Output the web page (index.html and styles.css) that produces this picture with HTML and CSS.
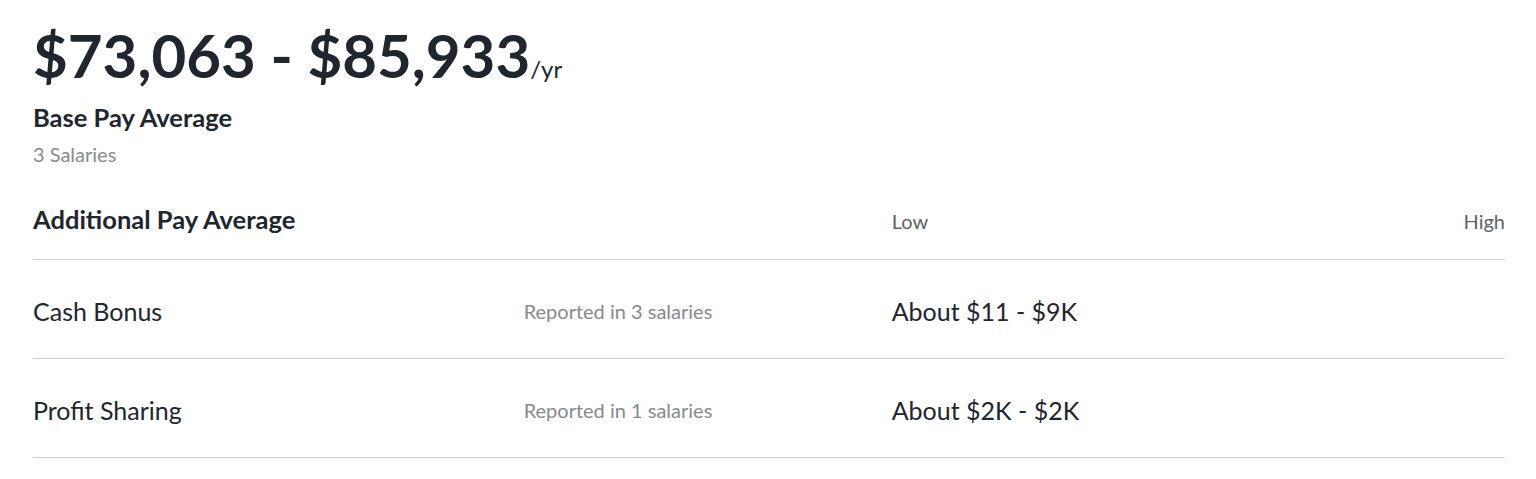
FILE: index.html
```html
<!DOCTYPE html>
<html lang="en">
<head>
  <meta charset="utf-8">
  <title>Salary Summary</title>
  <link rel="stylesheet" href="styles.css">
</head>
<body>
  <div class="salary-container">
    <div class="base-pay">
      <div class="pay-range">$73,063 - $85,933<span class="pay-period">/yr</span></div>
      <div class="pay-title">Base Pay Average</div>
      <div class="pay-count">3 Salaries</div>
    </div>

    <div class="additional-pay">
      <div class="pay-row pay-header">
        <div class="header-title">Additional Pay Average</div>
        <div></div>
        <div class="range-labels">
          <span>Low</span>
          <span>High</span>
        </div>
      </div>
      <div class="pay-row">
        <div class="pay-name">Cash Bonus</div>
        <div class="pay-reported">Reported in 3 salaries</div>
        <div class="pay-amount">About $11 - $9K</div>
      </div>
      <div class="pay-row">
        <div class="pay-name">Profit Sharing</div>
        <div class="pay-reported">Reported in 1 salaries</div>
        <div class="pay-amount">About $2K - $2K</div>
      </div>
    </div>
  </div>
</body>
</html>
```

FILE: styles.css
```css
:root {
  --primary-font: Lato, 'Noto Sans', 'Liberation Sans', sans-serif;
  --text-dark: #20262e;
  --text-muted: #878a8e;
  --text-label: #5f6368;
  --divider: #cdcfd1;
}

* {
  box-sizing: border-box;
  margin: 0;
  padding: 0;
}

body {
  font-family: var(--primary-font);
  color: var(--text-dark);
  background-color: #ffffff;
}

.salary-container {
  padding: 25px 31px 0 33px;
}

.pay-range {
  font-size: 60px;
  font-weight: 700;
  line-height: 60px;
}

.pay-period {
  font-size: 24px;
  font-weight: 400;
}

.pay-title {
  font-size: 25.5px;
  font-weight: 700;
  line-height: 30px;
  margin-top: 3px;
}

.pay-count {
  font-size: 20px;
  line-height: 24px;
  margin-top: 10px;
  color: var(--text-muted);
}

.additional-pay {
  margin-top: 38px;
}

.pay-row {
  display: grid;
  grid-template-columns: 4fr 3fr 5fr;
  align-items: center;
  height: 99px;
  padding-top: 4px;
  border-bottom: 1px solid var(--divider);
}

.pay-header {
  height: 56px;
  padding-top: 0;
  align-items: baseline;
}

.header-title {
  font-size: 25.5px;
  font-weight: 700;
  line-height: 30px;
}

.range-labels {
  display: flex;
  justify-content: space-between;
  align-items: baseline;
  font-size: 20px;
  line-height: 30px;
  color: var(--text-label);
}

.pay-name,
.pay-amount {
  font-size: 25px;
  line-height: 30px;
}

.pay-reported {
  font-size: 20px;
  line-height: 30px;
  color: var(--text-muted);
}
```
